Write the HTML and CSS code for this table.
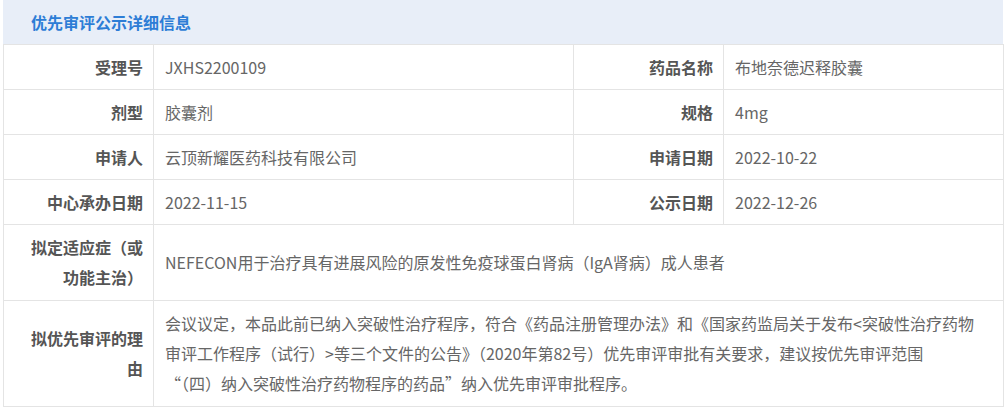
FILE: index.html
```html
<!DOCTYPE html>
<html lang="zh">
<head>
<meta charset="utf-8">
<title>优先审评公示详细信息</title>
<link rel="stylesheet" href="styles.css">
</head>
<body>
<div class="panel">
  <div class="head">优先审评公示详细信息</div>
  <table class="info">
    <colgroup>
      <col class="c-label">
      <col class="c-value">
      <col class="c-label">
      <col class="c-value2">
    </colgroup>
    <tr>
      <th>受理号</th><td>JXHS2200109</td>
      <th>药品名称</th><td>布地奈德迟释胶囊</td>
    </tr>
    <tr>
      <th>剂型</th><td>胶囊剂</td>
      <th>规格</th><td>4mg</td>
    </tr>
    <tr>
      <th>申请人</th><td>云顶新耀医药科技有限公司</td>
      <th>申请日期</th><td>2022-10-22</td>
    </tr>
    <tr>
      <th>中心承办日期</th><td>2022-11-15</td>
      <th>公示日期</th><td>2022-12-26</td>
    </tr>
    <tr class="tall">
      <th>拟定适应症（或功能主治）</th>
      <td colspan="3">NEFECON用于治疗具有进展风险的原发性免疫球蛋白肾病（IgA肾病）成人患者</td>
    </tr>
    <tr class="tall">
      <th>拟优先审评的理由</th>
      <td colspan="3">会议议定，本品此前已纳入突破性治疗程序，符合《药品注册管理办法》和《国家药监局关于发布&lt;突破性治疗药物审评工作程序（试行）&gt;等三个文件的公告》（2020年第82号）优先审评审批有关要求，建议按优先审评范围<span class="keep">“（四）纳入突破性治疗药物程序的药品”</span>纳入优先审评审批程序。</td>
    </tr>
  </table>
</div>
</body>
</html>
```

FILE: styles.css
```css
html, body {
  margin: 0;
  padding: 0;
  background: #fff;
}
body {
  font-family: "Noto Sans CJK SC", "Noto Sans", sans-serif;
}
.panel {
  margin-left: 3px;
  width: 1000px;
}
.head {
  height: 44px;
  background: #e8eef8;
  color: #2d7dd6;
  font-weight: bold;
  font-size: 16px;
  line-height: 44px;
  padding-left: 28px;
  box-sizing: border-box;
}
.info {
  width: 1000px;
  border-collapse: collapse;
  table-layout: fixed;
}
.c-label { width: 150px; }
.c-value { width: 420px; }
.c-value2 { width: 280px; }
.info th,
.info td {
  border: 1px solid #e4e4e4;
  padding: 7px 10px;
  line-height: 30px;
  font-size: 16px;
  vertical-align: middle;
}
.info .tall th,
.info .tall td {
  padding-bottom: 8px;
}
.info th {
  text-align: right;
  color: #555;
  font-weight: bold;
  padding-left: 20px;
}
.info td {
  text-align: left;
  color: #666;
  padding-left: 11px;
  padding-right: 22px;
}
.keep {
  white-space: nowrap;
}
```
